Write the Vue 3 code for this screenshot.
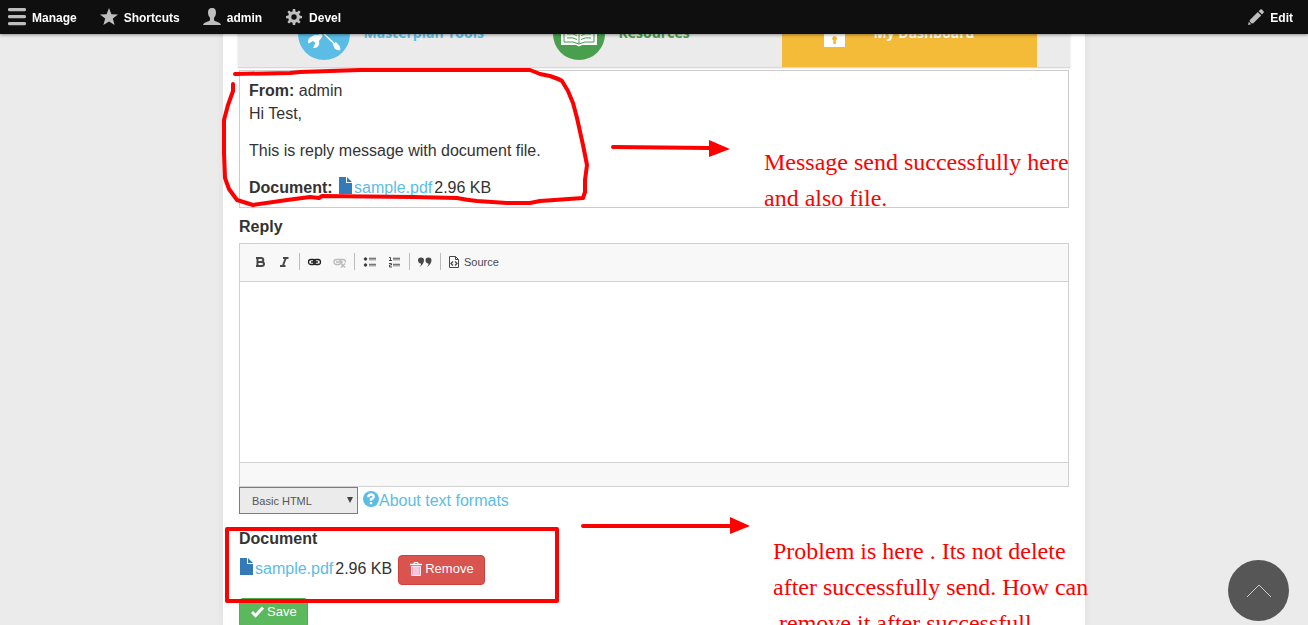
<template>
  <div class="app">
    <header class="admin-bar">
      <nav class="admin-links">
        <a v-for="link in adminLinks" :key="link.label" href="#">
          <svg width="18" height="18" viewBox="0 0 18 18">
            <path :d="link.icon" fill="#bebebe" fill-rule="evenodd" />
          </svg>
          <span>{{ link.label }}</span>
        </a>
      </nav>
      <a href="#" class="edit-link">
        <svg width="16" height="16" viewBox="0 0 16 16" fill="#bebebe">
          <path d="M0 16l.8-3.200 2.400 2.400z" />
          <path d="M1.600 11.200l8.200-8.200 3.400 3.400-8.200 8.200-1.500-.4-1.500-1.500z" />
          <path d="M10.700 2.200l1.600-1.600q.8-.8 1.600 0l1.600 1.600q.8.800 0 1.600l-1.500 1.600z" />
        </svg>
        <span>Edit</span>
      </a>
    </header>

    <div class="page">
      <nav class="site-nav">
        <a href="#" class="tools">
          <svg class="nav-icon" viewBox="0 0 52 52">
            <circle cx="26" cy="26" r="26" fill="#5bbde5" />
            <path d="M24 29l2-4-3 0-3 2q-4-1-6 1.500-4 1-4 5.500l.5 1.500 4.500-2.500 2.500 2-2.500 5q3 .5 5-1.500 2-3 1-5.500z" fill="#fff" />
            <path d="M23 23l14 13.500" stroke="#5bbde5" stroke-width="4" />
            <path d="M23 23l14 13.500" stroke="#fff" stroke-width="1.500" />
            <path d="M35.500 36.500l2.500-2 3.500 4 .5 3-1 .5-4-1.500z" fill="#fff" stroke="#fff" />
          </svg>
          <span>Masterplan Tools</span>
        </a>
        <a href="#" class="resources">
          <svg class="nav-icon" viewBox="0 0 52 52">
            <circle cx="26" cy="26" r="26" fill="#4a9f4e" />
            <path d="M8 20v17h15l3 1.500 3-1.500h15V20" fill="#fff" />
            <path d="M11 18v16h9l6 2 6-2h9V18z" fill="#fff" stroke="#4a9f4e" />
            <path d="M26 18v18M14 26q6-1 10 1.500M14 30q6-1 10 1.500M38 26q-6-1-10 1.500M38 30q-6-1-10 1.500" fill="none" stroke="#4a9f4e" />
          </svg>
          <span>Resources</span>
        </a>
        <a href="#" class="dashboard">
          <svg class="nav-icon" viewBox="0 0 52 52">
            <path d="M20 22v-6a6.500 6.500 0 0 1 13 0v6" fill="none" stroke="#fff" stroke-width="3" />
            <path d="M16 21h21v18H16z" fill="#fff" />
            <path d="M25.300 36v-3.500a2.300 2.300 0 1 1 2.600 0V36z" fill="#f3bb38" />
          </svg>
          <span>My Dashboard</span>
        </a>
      </nav>

      <main>
        <section class="message">
          <p><strong>From:</strong> admin<br />Hi Test,</p>
          <p>This is reply message with document file.</p>
          <p>
            <strong>Document: </strong>
            <span class="file">
              <svg width="14" height="17" viewBox="0 0 14 17"><path d="M1 0h7v6h6v11H1zM9 0l5 5H9z" fill="#337ab7" /></svg><a href="#">sample.pdf</a>
            </span>2.96 KB
          </p>
        </section>

        <form @submit.prevent>
          <label class="field-label" for="reply">Reply</label>
          <div class="editor">
            <div class="editor-toolbar">
              <template v-for="(tool, i) in tools" :key="i">
                <span v-if="tool === '|'" class="separator"></span>
                <button v-else type="button" :aria-label="tool" :disabled="tool === 'Unlink'">
                  <svg width="16" height="16" viewBox="0 0 16 16" fill="none" stroke="#484848">
                    <path v-if="tool === 'Bold'" d="M5.500 3v10M4 4h5q2.300 0 2.300 2T9 8H5h4.500q2.500 0 2.500 2t-2.500 2H4" stroke-width="2" />
                    <path v-else-if="tool === 'Italic'" d="M7 4h5.500M4 12h5.500M9.800 4l-3 8" stroke-width="2" />
                    <g v-else-if="tool === 'Link'" stroke="#222">
                      <rect x="1.500" y="5.500" width="7" height="5" rx="2.500" stroke-width="1.300" />
                      <rect x="6.500" y="5.500" width="7" height="5" rx="2.500" stroke-width="1.300" />
                      <path d="M4 8h7" stroke-width="1.500" />
                    </g>
                    <g v-else-if="tool === 'Unlink'" stroke="#bbb">
                      <rect x="3" y="5.500" width="7" height="5" rx="2.500" stroke-width="1.300" />
                      <path d="M8 5.500h4q2.500 0 2.500 3M5 8h7" stroke-width="1.300" />
                      <path d="M10 9.500l4 4M14 9.500l-4 4" stroke-width="1.500" />
                    </g>
                    <g v-else-if="tool === 'Bulleted list'">
                      <path d="M7 5h7M7 11h7" stroke="#aaa" stroke-width="3" />
                      <path d="M7 4.500h7M7 10.500h7" stroke="#777" />
                      <circle cx="3.500" cy="5" r="1.300" fill="#333" />
                      <circle cx="3.500" cy="11" r="1.300" fill="#333" />
                    </g>
                    <g v-else-if="tool === 'Numbered list'">
                      <path d="M7 5h7M7 11h7" stroke="#aaa" stroke-width="3" />
                      <path d="M7 4.500h7M7 10.500h7" stroke="#777" />
                      <path d="M3 3.500h1.500v3M3 6.500h3M3 9.500h2.500v1.500H3.500v2H6" />
                    </g>
                    <path v-else d="M7 6q0 4-4.500 7 2-2.500 1.500-3.500Q1 9 1 6.200T4 3.500t3 2.500zM14.500 6q0 4-4.500 7 2-2.500 1.500-3.500Q8.500 9 8.500 6.200t3-2.700 3 2.500z" fill="#484848" stroke="none" />
                  </svg>
                </button>
              </template>
              <button type="button" class="source">
                <svg width="12" height="14" viewBox="0 0 12 14" fill="none" stroke="#484848">
                  <path d="M1.500 1.500h6l3 3v8h-9zM7.500 1.500v3h3" />
                  <path d="M5 6.500l-2 2 2 2M7 6.500l2 2-2 2" stroke-width="1.300" />
                </svg>
                Source
              </button>
            </div>
            <textarea id="reply" v-model="reply"></textarea>
            <div class="editor-footer"></div>
          </div>

          <div class="format-row">
            <span class="select">
              <select v-model="format" aria-label="Text format">
                <option>Basic HTML</option>
              </select>
              <svg width="6" height="6" viewBox="0 0 6 6"><path d="M0 0h6L3 6z" fill="#444" /></svg>
            </span>
            <a href="#">
              <svg width="16" height="16" viewBox="0 0 16 16">
                <circle cx="8" cy="8" r="8" fill="#5bbde5" />
                <path d="M5.300 6.200q0-2.700 2.700-2.700t2.700 2.300Q10.700 7.300 8 8.200V9.800" fill="none" stroke="#fff" stroke-width="2.400" />
                <path d="M6.800 11h2.400v2.200H6.800z" fill="#fff" />
              </svg>About text formats
            </a>
          </div>

          <h4 class="field-label">Document</h4>
          <div class="upload-row">
            <span class="file">
              <svg width="14" height="17" viewBox="0 0 14 17"><path d="M1 0h7v6h6v11H1zM9 0l5 5H9z" fill="#337ab7" /></svg><a href="#">sample.pdf</a>
            </span>
            <span class="size">2.96 KB</span>
            <button type="button" class="btn remove">
              <svg width="12" height="14" viewBox="0 0 12 14" fill="none" stroke="#fff">
                <path d="M4 2V.500h4V2" />
                <path d="M0 2.500h12" stroke-width="1.500" />
                <path d="M1.500 4.500h9v9h-9z" fill="#f0a8c8" stroke="#fbe6f4" />
                <path d="M4 5v8M6 5v8M8 5v8" stroke="#fbe6f4" />
              </svg>
              Remove
            </button>
          </div>
          <button type="submit" class="btn save">
            <svg width="13" height="12" viewBox="0 0 13 12"><path d="M1 6l3.500 3.500L12 1.500" fill="none" stroke="#fff" stroke-width="3" /></svg>
            Save
          </button>
        </form>
      </main>

      <!-- red notes drawn over the page -->
      <svg class="marks" width="862" height="625" viewBox="0 0 862 625" fill="none" stroke="#f00" stroke-width="4" stroke-linecap="round" stroke-linejoin="round">
        <path d="M12 74L67 73 77 72 137 70H307L317 74 327 76Q336 79 339 81L345 91 350 103 354 118 360 145 364 165 362 180V192L360 198 317 201 307 203H284L254 201Q244 200 234 198L190 197 99 196 96 198 87 197 64 200 30 205 14 200 6 189 2 178 1 153V120L5 105 10 91V84" />
        <path d="M390 147l97 1M360 526h147" />
        <path d="M486 140l21 9-21 8zM507 517l20 9-20 8z" fill="#f00" stroke="none" />
        <path d="M4 529h330v72H4z" />
      </svg>
      <p class="note sent">Message send successfully here<br />and also file.</p>
      <p class="note problem">
        Problem is here . Its not delete<br />after successfully send. How can<br />&nbsp;remove it after successfull
      </p>
    </div>

    <button type="button" class="to-top" aria-label="Back to top">
      <svg width="26" height="14" viewBox="0 0 26 14"><path d="M1 13L13 1l12 12" fill="none" stroke="#ccc" /></svg>
    </button>
  </div>
</template>

<script setup>
import { ref } from "vue";

const reply = ref("");
const format = ref("Basic HTML");

const adminLinks = [
  {
    label: "Manage",
    icon: "M1.500 0h15a1.600 1.600 0 0 1 0 3.200h-15a1.600 1.600 0 0 1 0-3.200zM1.500 7h15a1.600 1.600 0 0 1 0 3.200h-15a1.600 1.600 0 0 1 0-3.200zM1.500 14h15a1.600 1.600 0 0 1 0 3.200h-15a1.600 1.600 0 0 1 0-3.200z",
  },
  {
    label: "Shortcuts",
    icon: "M9 0l2.400 6.200 6.600.2-5.200 4.200L14.600 17 9 13.400 3.400 17l1.800-6.400L0 6.400l6.600-.2z",
  },
  {
    label: "admin",
    icon: "M9 0C6 0 5 2 5 4.500c0 2.500 1 4 2 5.500v2C6 14 1 13.500 0 17h18c-1-3.500-6-3-7-5v-2c1-1.500 2-3 2-5.500C13 2 12 0 9 0z",
  },
  {
    label: "Devel",
    icon: "M7.800 1h2.400l.3 2.400 1.500.6 2-1.500 1.600 1.600-1.500 2 .6 1.500L17 7.900v2.300l-2.300.3-.6 1.500 1.500 2-1.600 1.600-2-1.500-1.500.6-.3 2.300H7.800l-.3-2.300-1.500-.6-2 1.500L2.400 14l1.500-2-.6-1.500L1 10.200V7.900l2.300-.3.6-1.500-1.500-2L4 2.500 6 4l1.500-.6zM9 6.300a2.700 2.700 0 1 0 0 5.400 2.700 2.700 0 0 0 0-5.400z",
  },
];

const tools = ["Bold", "Italic", "|", "Link", "Unlink", "|", "Bulleted list", "Numbered list", "|", "Quote", "|"];
</script>

<style>
body {
  background: #ebebeb;
}
</style>

<style scoped>
.app {
  height: 100vh;
  overflow: hidden;
  background: #ebebeb;
  color: #333;
  font-family: "Liberation Sans", Arial, sans-serif;
  font-size: 16px;
  line-height: 23px;
}
* {
  box-sizing: border-box;
}
p,
h4 {
  margin: 0;
}
a {
  color: #5bbde5;
  text-decoration: none;
}
button,
select,
textarea {
  font-family: inherit;
}
svg {
  flex: none;
}
.admin-bar {
  position: fixed;
  top: 0;
  left: 0;
  right: 0;
  z-index: 5;
  display: flex;
  justify-content: space-between;
  height: 34px;
  padding: 0 15px 0 8px;
  background: #0f0f0f;
  box-shadow: 0 1px 3px rgba(0, 0, 0, 0.4);
}
.admin-bar a {
  display: flex;
  align-items: center;
  gap: 6px;
  color: #fff;
  font-size: 12px;
  font-weight: bold;
}
.admin-bar span {
  padding-top: 2px;
}
.admin-links {
  display: flex;
  gap: 23px;
}
.page {
  position: relative;
  max-width: 862px;
  min-height: 100%;
  margin: 0 auto;
  padding: 0 16px;
  background: #fff;
  box-shadow: 0 0 8px rgba(0, 0, 0, 0.06);
}
.site-nav {
  display: flex;
  justify-content: center;
  height: 68px;
  margin: 0 -1px 2px;
  background: #ebebeb;
  border-bottom: 1px solid #d8d8d8;
  box-shadow: 0 0 2px rgba(0, 0, 0, 0.15);
}
.site-nav a {
  flex: 0 1 255px;
  display: flex;
  align-items: center;
  gap: 14px;
  padding-left: 26px;
  font-family: "Open Sans", sans-serif;
  font-size: 14px;
  font-weight: bold;
  line-height: 20px;
}
.site-nav span {
  padding-bottom: 2px;
}
.nav-icon {
  width: 52px;
  height: 52px;
}
.site-nav .resources {
  color: #4a9f4e;
}
.site-nav .dashboard {
  background: #f3bb38;
  color: #fff;
}
.message {
  display: flex;
  flex-direction: column;
  gap: 14px;
  padding: 8px 9px;
  border: 1px solid #ccc;
}
.file svg {
  margin-right: 2px;
  vertical-align: -1px;
}
.file {
  margin-right: 2px;
}
.message .file {
  margin-left: 1px;
}
.field-label {
  display: block;
  font-size: 16px;
  font-weight: bold;
}
form > label {
  margin: 7px 0 5px;
}
.editor {
  border: 1px solid #d1d1d1;
}
.editor-toolbar {
  display: flex;
  align-items: center;
  height: 38px;
  padding: 0 8px 2px;
  background: #f8f8f8;
  border-bottom: 1px solid #d1d1d1;
}
.editor-toolbar button {
  display: flex;
  align-items: center;
  gap: 4px;
  padding: 4px;
  border: 0;
  background: none;
  color: #484848;
  font-size: 11px;
}
.separator {
  width: 1px;
  height: 17px;
  margin: 0 3px;
  background: #bcbcbc;
}
textarea {
  display: block;
  width: 100%;
  height: 180px;
  padding: 16px;
  border: 0;
  outline: 0;
  resize: none;
  font-size: 16px;
}
.editor-footer {
  height: 24px;
  background: #f8f8f8;
  border-top: 1px solid #d1d1d1;
}
.format-row {
  display: flex;
  align-items: center;
  gap: 5px;
  margin-bottom: 13px;
}
.format-row a {
  display: flex;
  align-items: center;
}
.format-row a svg {
  margin-bottom: 3px;
}
.select {
  position: relative;
  display: flex;
}
select {
  width: 119px;
  height: 27px;
  padding: 0 12px;
  border: 1px solid #4a9f4e;
  border-radius: 0;
  background: #ebebeb;
  color: #555;
  font-size: 11px;
  appearance: none;
}
.select svg {
  position: absolute;
  top: 10px;
  right: 5px;
}
.upload-row {
  display: flex;
  align-items: center;
  margin: 5px 0 13px;
}
.upload-row span {
  padding-bottom: 3px;
}
.size {
  margin-right: 6px;
}
.btn {
  display: flex;
  align-items: center;
  gap: 3px;
  height: 30px;
  padding: 0 10px 3px 11px;
  border: 1px solid;
  border-radius: 4px;
  color: #fff;
  font-size: 13px;
}
.remove {
  background: #d9534f;
  border-color: #d43f3a;
}
.save {
  background: #5cb85c;
  border-color: #4cae4c;
}
.marks {
  position: absolute;
  top: 0;
  left: 0;
  overflow: visible;
  pointer-events: none;
}
.note {
  position: absolute;
  color: #f00;
  font-family: "Liberation Serif", serif;
  font-size: 24px;
  line-height: 36px;
  white-space: nowrap;
}
.sent {
  top: 144px;
  left: 541px;
}
.problem {
  top: 533px;
  left: 550px;
}
.to-top {
  position: fixed;
  right: 19px;
  bottom: 4px;
  display: flex;
  align-items: center;
  justify-content: center;
  width: 61px;
  height: 61px;
  border: 0;
  border-radius: 50%;
  background: #565656;
}
</style>
